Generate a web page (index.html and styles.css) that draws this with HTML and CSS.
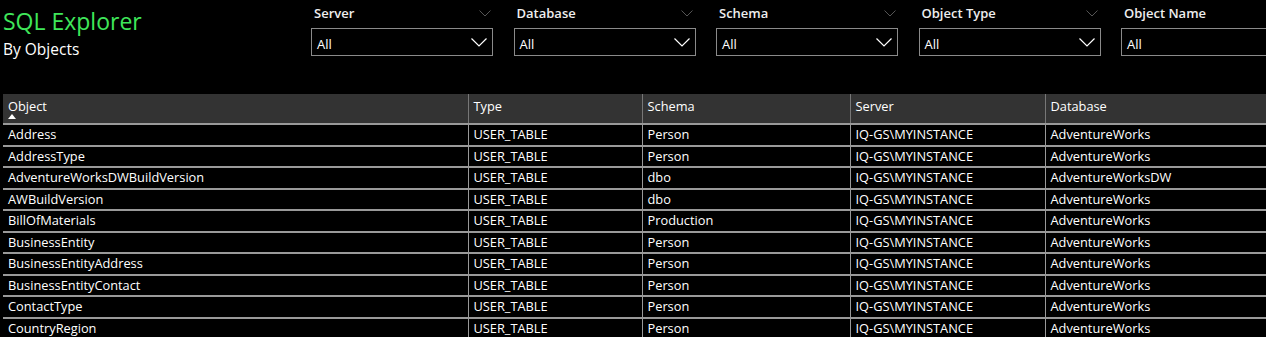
FILE: index.html
```html
<!DOCTYPE html>
<html lang="en">

<head>
  <meta charset="UTF-8">
  <title>SQL Explorer</title>
  <link rel="stylesheet" href="styles.css">
</head>

<body>
  <div class="top">
    <div class="title">
      <h1>SQL Explorer</h1>
      <p>By Objects</p>
    </div>
    <div class="filters">
      <div class="filter">
        <div class="label">Server<svg class="mini" viewBox="0 0 12 7"><path d="M0.5 0.5L6 6L11.5 0.5"/></svg></div>
        <div class="box">All<svg class="chev" viewBox="0 0 16 9"><path d="M0.5 0.5L8 8L15.5 0.5"/></svg></div>
      </div>
      <div class="filter">
        <div class="label">Database<svg class="mini" viewBox="0 0 12 7"><path d="M0.5 0.5L6 6L11.5 0.5"/></svg></div>
        <div class="box">All<svg class="chev" viewBox="0 0 16 9"><path d="M0.5 0.5L8 8L15.5 0.5"/></svg></div>
      </div>
      <div class="filter">
        <div class="label">Schema<svg class="mini" viewBox="0 0 12 7"><path d="M0.5 0.5L6 6L11.5 0.5"/></svg></div>
        <div class="box">All<svg class="chev" viewBox="0 0 16 9"><path d="M0.5 0.5L8 8L15.5 0.5"/></svg></div>
      </div>
      <div class="filter">
        <div class="label">Object Type<svg class="mini" viewBox="0 0 12 7"><path d="M0.5 0.5L6 6L11.5 0.5"/></svg></div>
        <div class="box">All<svg class="chev" viewBox="0 0 16 9"><path d="M0.5 0.5L8 8L15.5 0.5"/></svg></div>
      </div>
      <div class="filter">
        <div class="label">Object Name</div>
        <div class="box">All</div>
      </div>
    </div>
  </div>

  <table class="grid">
    <colgroup>
      <col class="c-obj">
      <col class="c-type">
      <col class="c-schema">
      <col class="c-server">
      <col class="c-db">
    </colgroup>
    <thead>
      <tr>
        <th>Object<span class="sort"></span></th>
        <th>Type</th>
        <th>Schema</th>
        <th>Server</th>
        <th>Database</th>
      </tr>
    </thead>
    <tbody>
      <tr><td>Address</td><td>USER_TABLE</td><td>Person</td><td>IQ-GS\MYINSTANCE</td><td>AdventureWorks</td></tr>
      <tr><td>AddressType</td><td>USER_TABLE</td><td>Person</td><td>IQ-GS\MYINSTANCE</td><td>AdventureWorks</td></tr>
      <tr><td>AdventureWorksDWBuildVersion</td><td>USER_TABLE</td><td>dbo</td><td>IQ-GS\MYINSTANCE</td><td>AdventureWorksDW</td></tr>
      <tr><td>AWBuildVersion</td><td>USER_TABLE</td><td>dbo</td><td>IQ-GS\MYINSTANCE</td><td>AdventureWorks</td></tr>
      <tr><td>BillOfMaterials</td><td>USER_TABLE</td><td>Production</td><td>IQ-GS\MYINSTANCE</td><td>AdventureWorks</td></tr>
      <tr><td>BusinessEntity</td><td>USER_TABLE</td><td>Person</td><td>IQ-GS\MYINSTANCE</td><td>AdventureWorks</td></tr>
      <tr><td>BusinessEntityAddress</td><td>USER_TABLE</td><td>Person</td><td>IQ-GS\MYINSTANCE</td><td>AdventureWorks</td></tr>
      <tr><td>BusinessEntityContact</td><td>USER_TABLE</td><td>Person</td><td>IQ-GS\MYINSTANCE</td><td>AdventureWorks</td></tr>
      <tr><td>ContactType</td><td>USER_TABLE</td><td>Person</td><td>IQ-GS\MYINSTANCE</td><td>AdventureWorks</td></tr>
      <tr><td>CountryRegion</td><td>USER_TABLE</td><td>Person</td><td>IQ-GS\MYINSTANCE</td><td>AdventureWorks</td></tr>
    </tbody>
  </table>
</body>

</html>
```

FILE: styles.css
```css
* {
  box-sizing: border-box;
}

html,
body {
  margin: 0;
  padding: 0;
  background: #000;
  color: #fff;
  font-family: "Open Sans", "Noto Sans", sans-serif;
  overflow: hidden;
}

.top {
  display: flex;
  height: 94px;
}

.title {
  width: 311px;
  padding: 6px 0 0 3px;
  flex-shrink: 0;
}

.title h1 {
  margin: 0;
  font-size: 23px;
  font-weight: 400;
  line-height: 31px;
  color: #3fe65a;
}

.title p {
  margin: 0;
  padding-top: 2px;
  font-size: 15.5px;
  line-height: 20px;
}

.filters {
  display: flex;
  gap: 20px;
  padding-top: 2px;
}

.filter {
  width: 182.5px;
  flex-shrink: 0;
}

.label {
  display: flex;
  justify-content: space-between;
  align-items: center;
  height: 22px;
  padding: 0 3px;
  font-size: 13px;
  font-weight: 600;
  color: #eee;
}

.mini {
  width: 12px;
  height: 7px;
  fill: none;
  stroke: #555;
  stroke-width: 1;
}

.box {
  display: flex;
  justify-content: space-between;
  align-items: center;
  width: 182px;
  height: 28px;
  margin-top: 4px;
  padding: 4px 5px 0 5px;
  border: 1px solid #8a8a8a;
  font-size: 13px;
}

.chev {
  width: 16px;
  height: 9px;
  margin-top: -4px;
  fill: none;
  stroke: #fff;
  stroke-width: 1.2;
}

.grid {
  margin-left: 3px;
  width: 1263px;
  table-layout: fixed;
  border-collapse: collapse;
  font-size: 12.8px;
}

.c-obj { width: 465px; }
.c-type { width: 174px; }
.c-schema { width: 208px; }
.c-server { width: 195px; }
.c-db { width: 221px; }

.grid th {
  height: 30px;
  padding: 2px 5px 0 5px;
  background: #333;
  font-weight: 400;
  text-align: left;
  vertical-align: top;
  line-height: 20px;
  border-left: 1px solid #777;
  border-bottom: 2px solid #999;
}

.grid td {
  height: 21.5px;
  padding: 0 5px;
  line-height: 19.5px;
  white-space: nowrap;
  overflow: hidden;
  border-left: 1px solid #999;
  border-bottom: 2px solid #999;
}

.grid th:first-child,
.grid td:first-child {
  border-left: none;
}

.sort {
  display: block;
  width: 0;
  height: 0;
  margin-top: -2px;
  border-left: 4px solid transparent;
  border-right: 4px solid transparent;
  border-bottom: 5px solid #fff;
}
```
